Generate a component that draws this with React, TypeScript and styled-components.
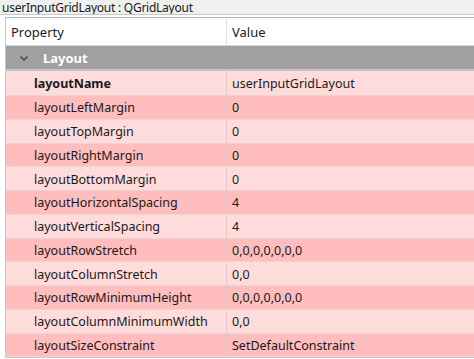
import React from "react";
import styled, { createGlobalStyle } from "styled-components";

const GlobalStyle = createGlobalStyle`
  html, body {
    margin: 0;
    padding: 0;
    background: #ffffff;
    overflow: hidden;
  }
  body {
    font-family: "Noto Sans", "Open Sans", sans-serif;
    font-size: 12.5px;
    color: #1a1a1a;
  }
`;

const Page = styled.div`
  width: 474px;
  height: 359px;
  display: flex;
  flex-direction: column;
  background: #ffffff;
  overflow: hidden;
`;

const TitleBar = styled.div`
  flex-shrink: 0;
  height: 14px;
  line-height: 15px;
  padding-left: 2px;
  font-size: 12px;
  letter-spacing: -0.25px;
  background: #f0f0f0;
  border-bottom: 1px solid #c8c8c8;
  white-space: nowrap;
  overflow: hidden;
`;

const Frame = styled.div`
  flex-shrink: 0;
  margin-top: 2px;
  margin-left: 5px;
  border-top: 1px solid #b4b4b4;
  border-left: 1px solid #c8c8c8;
  border-bottom: 1px solid #c8c8c8;
  display: flex;
  flex-direction: column;
`;

const Row = styled.div<{ $bg: string; $h: number }>`
  flex-shrink: 0;
  display: grid;
  grid-template-columns: 221px 1fr;
  height: ${(p) => p.$h}px;
  background: ${(p) => p.$bg};
  border-bottom: 1px solid ${(p) => (p.$bg === "#ffffff" ? "#d8d8d8" : "#f2d2d2")};
  box-sizing: border-box;
`;

const Cell = styled.div<{ $indent?: number; $bold?: boolean; $divider?: boolean }>`
  display: flex;
  align-items: center;
  padding-left: ${(p) => p.$indent ?? 5}px;
  padding-top: 1px;
  font-weight: ${(p) => (p.$bold ? 700 : 400)};
  border-right: ${(p) => (p.$divider ? "1px solid #e4c8c8" : "none")};
  white-space: nowrap;
  overflow: hidden;
`;

const HeaderCell = styled(Cell)`
  font-size: 13px;
  border-right: 1px solid #e0e0e0;
  &:last-child {
    border-right: none;
  }
`;

const GroupRow = styled.div`
  flex-shrink: 0;
  height: 25px;
  display: flex;
  align-items: center;
  padding-top: 1px;
  background: #a0a0a0;
  border-bottom: 2px solid #c4c4c4;
  box-sizing: border-box;
`;

const Chevron = styled.svg`
  margin-left: 13px;
  width: 10px;
  height: 10px;
`;

const GroupLabel = styled.span`
  margin-left: 14px;
  color: #ffffff;
  font-weight: 700;
  font-size: 13px;
`;

const props: [string, string][] = [
  ["layoutName", "userInputGridLayout"],
  ["layoutLeftMargin", "0"],
  ["layoutTopMargin", "0"],
  ["layoutRightMargin", "0"],
  ["layoutBottomMargin", "0"],
  ["layoutHorizontalSpacing", "4"],
  ["layoutVerticalSpacing", "4"],
  ["layoutRowStretch", "0,0,0,0,0,0,0"],
  ["layoutColumnStretch", "0,0"],
  ["layoutRowMinimumHeight", "0,0,0,0,0,0,0"],
  ["layoutColumnMinimumWidth", "0,0"],
  ["layoutSizeConstraint", "SetDefaultConstraint"],
];

const App = () => {
  return (
    <Page>
      <GlobalStyle />
      <TitleBar>userInputGridLayout : QGridLayout</TitleBar>
      <Frame>
        <Row $bg="#ffffff" $h={28}>
          <HeaderCell>Property</HeaderCell>
          <HeaderCell>Value</HeaderCell>
        </Row>
        <GroupRow>
          <Chevron viewBox="0 0 10 10">
            <path d="M1.5 3.5 L5 7 L8.5 3.5" fill="none" stroke="#333" strokeWidth="1.1" />
          </Chevron>
          <GroupLabel>Layout</GroupLabel>
        </GroupRow>
        {props.map(([name, value], i) => (
          <Row key={name} $bg={i % 2 === 0 ? "#ffdcdc" : "#ffbdbd"} $h={i === 0 ? 25 : 23.75}>
            <Cell $indent={28} $bold={i === 0} $divider>
              {name}
            </Cell>
            <Cell>{value}</Cell>
          </Row>
        ))}
      </Frame>
    </Page>
  );
};

export default App;
